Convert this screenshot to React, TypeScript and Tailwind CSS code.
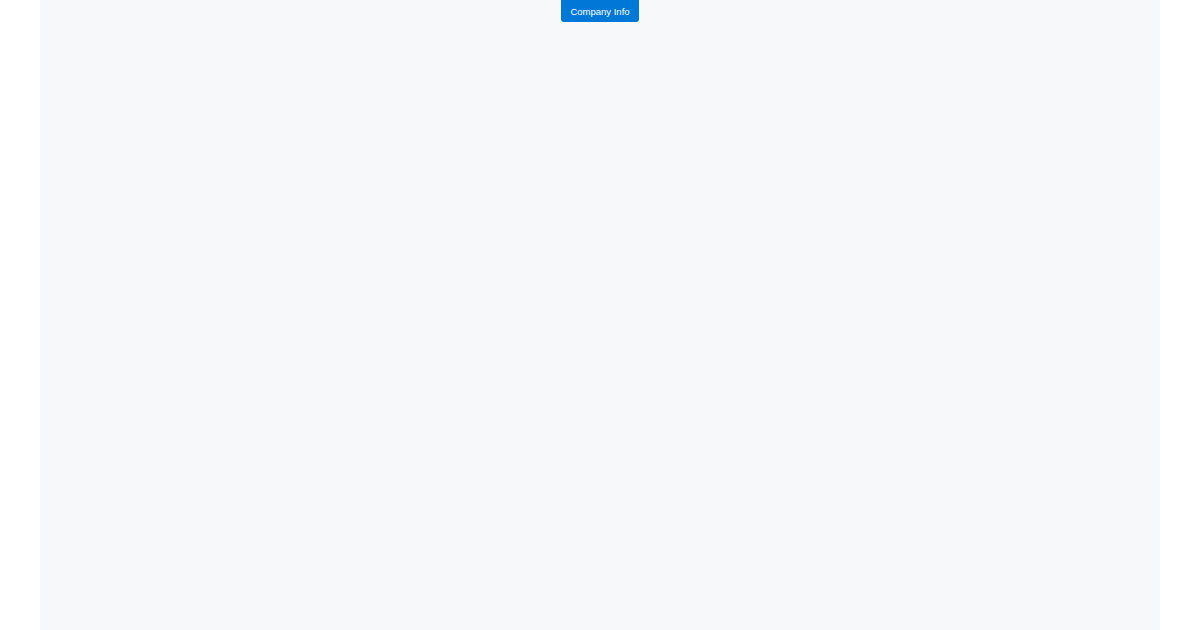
import React from "react";

export default function App() {
  return (
    <div className="w-full h-[630px] bg-white flex justify-center" style={{ fontFamily: '"Liberation Sans", Arial, sans-serif' }}>
      <div className="w-[1120px] h-[630px] bg-[#f7f8fa] flex justify-center items-start">
        <button className="w-[78px] h-[22px] bg-[#0078d7] text-white text-[9.5px] rounded-b-[3px] flex items-center justify-center leading-none pt-[1px]">
          Company Info
        </button>
      </div>
    </div>
  );
}
